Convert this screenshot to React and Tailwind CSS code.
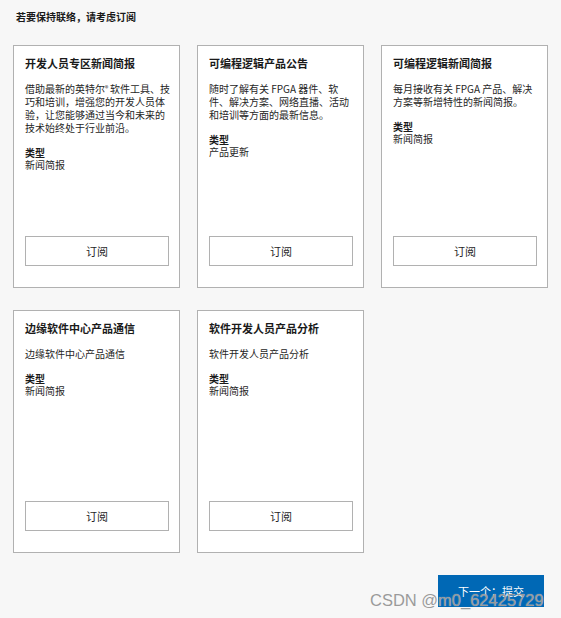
const cards = [
  {
    title: "开发人员专区新闻简报",
    desc: (
      <>
        借助最新的英特尔<span className="relative top-[-2px] text-[7px] leading-none">® </span>软件工具、技巧和培训，增强您的开发人员体验，让您能够通过当今和未来的技术始终处于行业前沿。
      </>
    ),
    type: "新闻简报",
  },
  {
    title: "可编程逻辑产品公告",
    desc: "随时了解有关 FPGA 器件、软件、解决方案、网络直播、活动和培训等方面的最新信息。",
    type: "产品更新",
  },
  {
    title: "可编程逻辑新闻简报",
    desc: "每月接收有关 FPGA 产品、解决方案等新增特性的新闻简报。",
    type: "新闻简报",
  },
  {
    title: "边缘软件中心产品通信",
    desc: "边缘软件中心产品通信",
    type: "新闻简报",
  },
  {
    title: "软件开发人员产品分析",
    desc: "软件开发人员产品分析",
    type: "新闻简报",
  },
];

function Card({ title, desc, type }) {
  return (
    <div className="flex h-[243px] flex-col border border-[#b1b1b1] bg-white pl-[11px] pr-[10px] pt-[10px] pb-[21px]">
      <h3 className="text-[11px] font-bold leading-[15px] text-[#1a1a1a]">{title}</h3>
      <p className="mr-[-4px] mt-[11px] text-[10px] leading-[13px] text-[#262626]">{desc}</p>
      <div className="mt-[13px] text-[10px] leading-[12px] text-[#262626]">
        <p className="font-bold text-[#1a1a1a]">类型</p>
        <p>{type}</p>
      </div>
      <button className="mt-auto h-[30px] w-full border border-[#b1b1b1] bg-white text-[11px] text-[#1f1f1f]">
        订阅
      </button>
    </div>
  );
}

export default function App() {
  return (
    <div
      className="relative h-[618px] w-[561px] overflow-hidden bg-[#f7f7f7] pl-[13px]"
      style={{ fontFamily: '"Noto Sans CJK SC", "Noto Sans", sans-serif' }}
    >
      <p className="pl-[3px] pt-[10px] text-[10px] font-bold leading-[14px] text-[#1a1a1a]">
        若要保持联络，请考虑订阅
      </p>

      <div className="mt-[21px] grid w-[535px] grid-cols-[167px_167px_167px] gap-x-[17px] gap-y-[22px]">
        {cards.map((c) => (
          <Card key={c.title} {...c} />
        ))}
      </div>

      <div className="mt-[22px] flex w-[531px] justify-end">
        <button className="h-[32px] w-[106px] bg-[#0068b5] text-[11px] text-white">
          下一个：提交
        </button>
      </div>

      <span
        className="pointer-events-none absolute left-[370px] top-[590px] text-[16.5px] leading-[20px] text-[#9a9a9a]"
        style={{ fontFamily: '"Liberation Sans", Arial, sans-serif', textShadow: "0 0 1px rgba(255,255,255,0.6)" }}
      >
        CSDN @m0_62425729
      </span>
    </div>
  );
}
